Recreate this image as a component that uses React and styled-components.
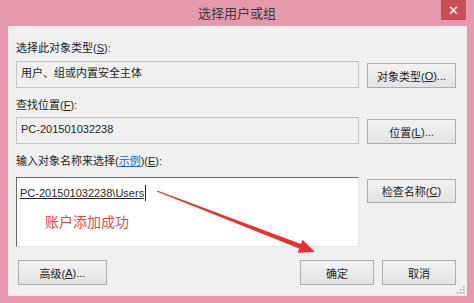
import React from "react";
import styled, { createGlobalStyle } from "styled-components";

const Global = createGlobalStyle`
  html, body { margin: 0; padding: 0; }
  body { width: 474px; height: 303px; overflow: hidden; background: #e699ad; }
  * { box-sizing: border-box; }
`;

const FONT = `"Liberation Sans", "Noto Sans CJK SC", sans-serif`;

const Window = styled.div`
  position: relative;
  width: 474px;
  height: 303px;
  background: #e699ad;
  display: flex;
  flex-direction: column;
  font-family: ${FONT};
  color: #1e1e1e;
`;

const TitleBar = styled.div`
  position: relative;
  height: 26px;
  display: flex;
  align-items: center;
  justify-content: center;
  font-size: 13px;
  color: #3a3a3a;
  padding-bottom: 1px;
`;

const CloseButton = styled.div`
  position: absolute;
  top: 0;
  right: 8px;
  width: 25px;
  height: 20px;
  background: #c94e55;
  color: #fff;
  font-size: 13px;
  font-weight: bold;
  display: flex;
  align-items: center;
  justify-content: center;
  font-family: "DejaVu Sans", sans-serif;
`;

const Panel = styled.div`
  position: relative;
  margin: 0 7px 0 8px;
  height: 270px;
  background: #f0f0f0;
  padding: 14px 11px 11px 8px;
  display: flex;
  flex-direction: column;
`;

const Label = styled.div`
  font-size: 11px;
  line-height: 16px;
  height: 16px;
  margin-top: ${(p) => p.$mt || 0}px;
  white-space: nowrap;
`;

const U = styled.span`
  text-decoration: underline;
`;

const Link = styled.span`
  color: #1a64c8;
  text-decoration: underline;
`;

const Row = styled.div`
  display: grid;
  grid-template-columns: 343px 89px;
  column-gap: 8px;
  align-items: ${(p) => p.$align || "end"};
  margin-top: ${(p) => p.$mt || 0}px;
`;

const Field = styled.div`
  height: 27px;
  border: 1px solid #c3c3c3;
  background: #f0f0f0;
  font-size: 11px;
  line-height: 16px;
  padding: 3px 4px 0 4px;
  white-space: nowrap;
`;

const TextArea = styled.div`
  position: relative;
  height: 70px;
  background: #fff;
  border-top: 1px solid #6a6a6a;
  border-left: 1px solid #6a6a6a;
  border-right: 1px solid #e6e6e6;
  border-bottom: 1px solid #e6e6e6;
  padding: 7px 3px 0 3px;
  font-size: 11px;
  line-height: 16px;
`;

const Entered = styled.span`
  text-decoration: underline;
  color: #2a2a2a;
`;

const Caret = styled.span`
  display: inline-block;
  width: 1px;
  height: 16px;
  background: #222;
  vertical-align: -4px;
  margin-left: 1px;
`;

const Annotation = styled.div`
  position: absolute;
  left: 28px;
  top: 35px;
  font-size: 14px;
  color: #e8494e;
  font-family: "Noto Sans CJK SC", sans-serif;
`;

const Button = styled.div`
  height: ${(p) => p.$h || 25}px;
  width: ${(p) => p.$w || 89}px;
  margin-top: ${(p) => p.$mt || 0}px;
  border: 1px solid #adadad;
  background: linear-gradient(#f2f2f2, #e3e3e3);
  font-size: 11px;
  display: flex;
  align-items: center;
  justify-content: center;
  white-space: nowrap;
  color: #222;
`;

const Footer = styled.div`
  display: flex;
  gap: 8px;
  margin-top: 13px;
  padding-left: 2px;
`;

const Spacer = styled.div`
  flex: 1;
`;

const Grip = styled.svg`
  position: absolute;
  right: 2px;
  bottom: 2px;
`;

const ArrowSvg = styled.svg`
  position: absolute;
  left: 0;
  top: 0;
  pointer-events: none;
`;

export default function App() {
  return (
    <>
      <Global />
      <Window>
        <TitleBar>
          选择用户或组
          <CloseButton>✕</CloseButton>
        </TitleBar>
        <Panel>
          <Label>
            选择此对象类型(<U>S</U>):
          </Label>
          <Row $mt={5}>
            <Field>用户、组或内置安全主体</Field>
            <Button>
              对象类型(<U>O</U>)...
            </Button>
          </Row>
          <Label $mt={9}>
            查找位置(<U>F</U>):
          </Label>
          <Row $mt={4}>
            <Field>PC-201501032238</Field>
            <Button>
              位置(<U>L</U>)...
            </Button>
          </Row>
          <Label $mt={9}>
            输入对象名称来选择(<Link>示例</Link>)(<U>E</U>):
          </Label>
          <Row $mt={8} $align="start">
            <TextArea>
              <Entered>PC-201501032238\Users</Entered>
              <Caret />
              <Annotation>账户添加成功</Annotation>
            </TextArea>
            <Button $mt={2} $h={24}>
              检查名称(<U>C</U>)
            </Button>
          </Row>
          <Footer>
            <Button>
              高级(<U>A</U>)...
            </Button>
            <Spacer />
            <Button $w={74}>确定</Button>
            <Button $w={74}>取消</Button>
          </Footer>
          <Grip width="8" height="8" viewBox="0 0 8 8">
            <g fill="#a8a8a8">
              <rect x="6" y="0" width="1.5" height="1.5" />
              <rect x="3" y="3" width="1.5" height="1.5" />
              <rect x="6" y="3" width="1.5" height="1.5" />
              <rect x="0" y="6" width="1.5" height="1.5" />
              <rect x="3" y="6" width="1.5" height="1.5" />
              <rect x="6" y="6" width="1.5" height="1.5" />
            </g>
          </Grip>
        </Panel>
        <ArrowSvg width="474" height="303" viewBox="0 0 474 303">
          <polygon
            points="157.2,190.5 301,243.9 302.6,239.7 315,252 297.6,252.7 299.2,248.5 156.8,191.5"
            fill="#e8302e"
          />
        </ArrowSvg>
      </Window>
    </>
  );
}
